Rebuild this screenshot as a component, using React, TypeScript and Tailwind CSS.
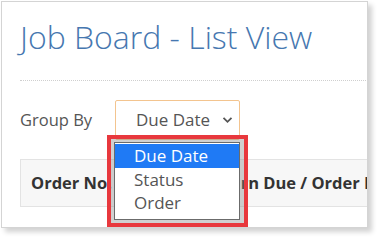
import React from "react";

export default function App() {
  return (
    <div className="relative w-[380px] h-[239px] bg-white overflow-hidden" style={{ fontFamily: '"Open Sans", "Liberation Sans", sans-serif' }}>
      <div className="absolute left-[1px] top-[1px] w-[367px] h-[227px] bg-white border border-[#d4d4d4] shadow-[4px_4px_5px_rgba(0,0,0,0.18)] overflow-hidden">
        <div className="pl-[18px] pt-[16px]">
          <h1 className="text-[32px] leading-[38px] font-light text-[#4677b0] whitespace-nowrap">Job Board - List View</h1>
          <div className="mt-[24px] border-t border-dotted border-[#cfcfcf] w-[400px]" />
          <div className="mt-[19px] flex items-center h-[40px]">
            <span className="text-[16.5px] text-[#555] w-[95px]">Group By</span>
            <div className="h-[40px] w-[125px] border border-[#f3c48f] rounded-[2px] flex items-center pl-[20px] pr-[3px]">
              <span className="text-[17px] text-[#555]">Due Date</span>
              <svg className="ml-auto mr-[3px]" width="11" height="8" viewBox="0 0 11 8"><path d="M1.5 1.8 L5.5 5.8 L9.5 1.8" fill="none" stroke="#555" strokeWidth="1.8" /></svg>
            </div>
          </div>
          <div className="mt-[19px] w-[420px] border-t border-l border-b border-[#e3e3e3] bg-[#f7f7f7] flex h-[48px] items-center">
            <span className="pl-[10px] w-[181px] text-[16.5px] font-bold text-[#333]">Order No.</span>
            <span className="text-[16.5px] font-bold text-[#333] whitespace-nowrap">Return Due / Order Date</span>
          </div>
          <div className="flex h-[30px] items-start">
            <span className="pl-[46px] text-[15px] text-[#888] leading-[16px] mt-[12px]">- - -</span>
          </div>
        </div>
      </div>
      {/* annotation red box */}
      <div className="absolute left-[107px] top-[135px] w-[141px] h-[92px] border-[4px] border-[#e8383d] bg-[#8a8a8a]/40">
        <div className="absolute left-[3px] top-[3px] right-[4px] bottom-[3px] bg-white border border-[#6b6b6b] flex flex-col pt-[1px] text-[17px] leading-[23px]">
          <div className="bg-[#1f7af5] text-white pl-[19px] h-[24px]">Due Date</div>
          <div className="text-[#555] pl-[19px] h-[23px]">Status</div>
          <div className="text-[#555] pl-[19px] h-[23px]">Order</div>
        </div>
      </div>
    </div>
  );
}
